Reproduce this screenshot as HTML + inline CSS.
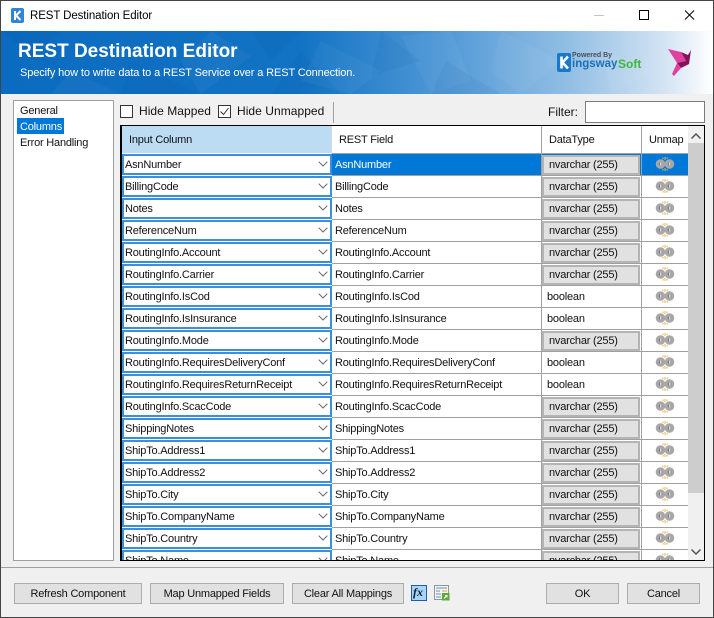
<!DOCTYPE html>
<html><head><meta charset="utf-8"><style>
html,body{margin:0;padding:0;width:714px;height:618px;overflow:hidden;background:#f0f0f0}
body{font-family:"Liberation Sans",sans-serif;font-size:11px;letter-spacing:-.2px;color:#111;position:relative}
.a{position:absolute;white-space:nowrap}
#win{position:absolute;left:0;top:0;width:712px;height:616px;border:1px solid #444}
.btn{position:absolute;top:583px;height:19px;background:#e1e1e1;border:1px solid #adadad;text-align:center;line-height:21px}
#grid{position:absolute;left:120px;top:125px;width:582px;height:434px;border:1px solid #000;border-left-width:2px;background:#fff;overflow:hidden}
.r{position:absolute;left:0;width:566px;height:22px;white-space:nowrap}
.i{position:absolute;left:0;top:0;width:205px;height:17px;border:2px solid #3a90dc;background:#fff;line-height:19px;padding-left:1px}
.f{position:absolute;left:210px;top:0;width:206px;height:21px;line-height:23px;padding-left:3px;border-bottom:1px solid #a0a0a0}
.t{position:absolute;left:420px;top:0;width:99px;height:21px;border-bottom:1px solid #a0a0a0;line-height:23px}
.t b{font-weight:normal;position:absolute;left:0;top:1px;width:89px;height:16px;border:2px solid #b4b4b4;background:#e1e1e1;line-height:17px;padding-left:5px}
.t span{position:absolute;left:5px}
.u{position:absolute;left:520px;top:0;width:46px;height:21px;border-bottom:1px solid #a0a0a0}
.u svg{position:absolute;left:13px;top:1px}
.c{position:absolute;left:194px;top:5px}
.v{position:absolute;top:0;width:1px;height:434px;background:#a0a0a0}
</style></head><body>
<svg width="0" height="0" style="position:absolute"><defs>
<symbol id="un" viewBox="0 0 20 18"><g fill="#a8a8a8"><circle cx="5.500" cy="9" r="4.800"/><circle cx="14.500" cy="9" r="4.800"/></g><g fill="#808080"><circle cx="5.500" cy="9" r="1.800"/><circle cx="14.500" cy="9" r="1.800"/></g><g fill="#dcdcdc"><rect x="5" y="7.500" width="1.500" height="3"/><rect x="14" y="7.500" width="1.500" height="3"/></g><path d="M10 2v3M10 13v3M7.500 2.500l.8 1.500M12.500 2.500l-.8 1.500M7.500 15.500l.8-1.500M12.500 15.500l-.8-1.500" stroke="#f5b04a" stroke-width="1" fill="none"/></symbol>
<symbol id="ch" viewBox="0 0 10 6"><path d="M.7.700 5 5 9.300.700" stroke="#666" stroke-width="1" fill="none"/></symbol>
</defs></svg>
<div id="win"></div>
<div class="a" style="left:1px;top:1px;width:712px;height:30px;background:#fff"></div>
<svg class="a" style="left:11px;top:8px" width="13" height="15"><rect width="13" height="15" rx="2" fill="#2f86d6"/><path d="M4 3v9M9.500 3 5 7.500 9.500 12" stroke="#fff" stroke-width="2" fill="none"/></svg>
<div class="a" style="left:30px;top:10px;font-size:11.500px;letter-spacing:-.1px;color:#000">REST Destination Editor</div>
<svg class="a" style="left:594px;top:10px" width="110" height="12"><path d="M0 5.500h10" stroke="#c4c4c4"/><rect x="45.500" y=".5" width="9" height="9" fill="none" stroke="#000"/><path d="M91 .5l9 9M100 .5l-9 9" stroke="#000"/></svg>

<svg class="a" style="left:1px;top:31px" width="712" height="63">
<defs><linearGradient id="g" x1="0" x2="1" y1="0" y2="0"><stop offset="0" stop-color="#0a6bc0"/><stop offset=".42" stop-color="#1273c4"/><stop offset=".62" stop-color="#4f98d6"/><stop offset=".8" stop-color="#93bfe4"/><stop offset=".93" stop-color="#d2e3f3"/><stop offset="1" stop-color="#fff"/></linearGradient></defs>
<rect width="712" height="63" fill="url(#g)"/>
<g fill="#fff" opacity=".04"><path d="M210 0 250 25 200 63 180 30Z"/><path d="M320 10 380 40 350 63 300 50Z"/><path d="M400 5 450 0 470 50 430 63Z"/><path d="M500 0 560 30 520 63 490 40Z"/><path d="M600 15 650 40 610 63Z"/><path d="M70 40 120 63 50 63Z"/></g>
<g fill="#003f80" opacity=".06"><path d="M380 0 420 30 370 45Z"/><path d="M300 20 340 63 270 63Z"/><path d="M250 0 300 0 270 30Z"/><path d="M445 30 500 63 430 63Z"/><path d="M0 0 60 0 30 25Z"/><path d="M130 30 200 63 120 63Z"/></g>
</svg>
<div class="a" style="left:18px;top:41px;font-size:19px;font-weight:bold;color:#fff;letter-spacing:0">REST Destination Editor</div>
<div class="a" style="left:20px;top:67px;font-size:11px;letter-spacing:-.12px;color:#fff">Specify how to write data to a REST Service over a REST Connection.</div>
<svg class="a" style="left:557px;top:53px" width="15" height="19"><rect width="14" height="19" rx="2" fill="#1a79c9"/><path d="M4.500 3.500v12M11 3.500 5.500 9.500 11 15.500" stroke="#fff" stroke-width="2.600" fill="none"/></svg>
<div class="a" style="left:572px;top:52px;font-size:7px;letter-spacing:0;font-weight:bold;color:#44505c">Powered By</div>
<div class="a" style="left:572px;top:58px;font-size:11.500px;letter-spacing:0;font-weight:bold;color:#1c6fb8">ingsway</div>
<div class="a" style="left:618px;top:57px;font-size:12px;letter-spacing:0;font-weight:bold;color:#3db83a">Soft</div>
<svg class="a" style="left:668px;top:48px" width="25" height="28"><path d="M0 1 13 4 18 13 9 15Z" fill="#e0409f"/><path d="M13 4 20 7 23 2 21 16 13 20 9 15 18 13Z" fill="#8a0f5c"/><path d="M9 15 13 20 6 28 4 26Z" fill="#e0409f"/></svg>

<div class="a" style="left:13px;top:100px;width:99px;height:459px;background:#fff;border:1px solid #a0a0a0"></div>
<div class="a" style="left:20px;top:105px">General</div>
<div class="a" style="left:17px;top:118px;width:47px;height:16px;background:#0078d7;color:#fff;line-height:19px;text-indent:3px">Columns</div>
<div class="a" style="left:20px;top:137px">Error Handling</div>

<div class="a" style="left:120px;top:105px;width:11px;height:11px;background:#fff;border:1px solid #333"></div>
<div class="a" style="left:139px;top:104px;font-size:12px;letter-spacing:.05px">Hide Mapped</div>
<svg class="a" style="left:218px;top:105px" width="13" height="13"><rect x=".5" y=".5" width="12" height="12" fill="#fff" stroke="#333"/><path d="M2.500 6.500 5.500 9.500 10.500 3" stroke="#333" fill="none"/></svg>
<div class="a" style="left:237px;top:104px;font-size:12px;letter-spacing:.05px">Hide Unmapped</div>
<div class="a" style="left:333px;top:102px;width:1px;height:21px;background:#a0a0a0"></div>
<div class="a" style="left:548px;top:105px;font-size:12px;letter-spacing:0">Filter:</div>
<div class="a" style="left:585px;top:101px;width:118px;height:20px;background:#fff;border:1px solid #7a7a7a"></div>

<div id="grid">
<div class="a" style="left:0;top:0;width:209px;height:27px;background:#bcdcf4"></div>
<div class="a" style="left:7px;top:8px">Input Column</div>
<div class="a" style="left:217px;top:8px">REST Field</div>
<div class="a" style="left:427px;top:8px">DataType</div>
<div class="a" style="left:527px;top:8px">Unmap</div>
<div class="a" style="left:209px;top:27px;width:357px;height:1px;background:#a0a0a0"></div>

<div class="r" style="top:28px"><div class="a" style="left:210px;top:0;width:356px;height:21px;background:#0078d7"></div><div class="i">AsnNumber<svg class="c" width="10" height="6"><use href="#ch"/></svg></div><div class="f" style="border-color:#a0a0a0;color:#fff">AsnNumber</div><div class="t"><b>nvarchar (255)</b></div><div class="u"><svg width="20" height="18"><use href="#un"/></svg></div></div>
<div class="r" style="top:50px"><div class="i">BillingCode<svg class="c" width="10" height="6"><use href="#ch"/></svg></div><div class="f">BillingCode</div><div class="t"><b>nvarchar (255)</b></div><div class="u"><svg width="20" height="18"><use href="#un"/></svg></div></div>
<div class="r" style="top:72px"><div class="i">Notes<svg class="c" width="10" height="6"><use href="#ch"/></svg></div><div class="f">Notes</div><div class="t"><b>nvarchar (255)</b></div><div class="u"><svg width="20" height="18"><use href="#un"/></svg></div></div>
<div class="r" style="top:94px"><div class="i">ReferenceNum<svg class="c" width="10" height="6"><use href="#ch"/></svg></div><div class="f">ReferenceNum</div><div class="t"><b>nvarchar (255)</b></div><div class="u"><svg width="20" height="18"><use href="#un"/></svg></div></div>
<div class="r" style="top:116px"><div class="i">RoutingInfo.Account<svg class="c" width="10" height="6"><use href="#ch"/></svg></div><div class="f">RoutingInfo.Account</div><div class="t"><b>nvarchar (255)</b></div><div class="u"><svg width="20" height="18"><use href="#un"/></svg></div></div>
<div class="r" style="top:138px"><div class="i">RoutingInfo.Carrier<svg class="c" width="10" height="6"><use href="#ch"/></svg></div><div class="f">RoutingInfo.Carrier</div><div class="t"><b>nvarchar (255)</b></div><div class="u"><svg width="20" height="18"><use href="#un"/></svg></div></div>
<div class="r" style="top:160px"><div class="i">RoutingInfo.IsCod<svg class="c" width="10" height="6"><use href="#ch"/></svg></div><div class="f">RoutingInfo.IsCod</div><div class="t"><span>boolean</span></div><div class="u"><svg width="20" height="18"><use href="#un"/></svg></div></div>
<div class="r" style="top:182px"><div class="i">RoutingInfo.IsInsurance<svg class="c" width="10" height="6"><use href="#ch"/></svg></div><div class="f">RoutingInfo.IsInsurance</div><div class="t"><span>boolean</span></div><div class="u"><svg width="20" height="18"><use href="#un"/></svg></div></div>
<div class="r" style="top:204px"><div class="i">RoutingInfo.Mode<svg class="c" width="10" height="6"><use href="#ch"/></svg></div><div class="f">RoutingInfo.Mode</div><div class="t"><b>nvarchar (255)</b></div><div class="u"><svg width="20" height="18"><use href="#un"/></svg></div></div>
<div class="r" style="top:226px"><div class="i">RoutingInfo.RequiresDeliveryConf<svg class="c" width="10" height="6"><use href="#ch"/></svg></div><div class="f">RoutingInfo.RequiresDeliveryConf</div><div class="t"><span>boolean</span></div><div class="u"><svg width="20" height="18"><use href="#un"/></svg></div></div>
<div class="r" style="top:248px"><div class="i">RoutingInfo.RequiresReturnReceipt<svg class="c" width="10" height="6"><use href="#ch"/></svg></div><div class="f">RoutingInfo.RequiresReturnReceipt</div><div class="t"><span>boolean</span></div><div class="u"><svg width="20" height="18"><use href="#un"/></svg></div></div>
<div class="r" style="top:270px"><div class="i">RoutingInfo.ScacCode<svg class="c" width="10" height="6"><use href="#ch"/></svg></div><div class="f">RoutingInfo.ScacCode</div><div class="t"><b>nvarchar (255)</b></div><div class="u"><svg width="20" height="18"><use href="#un"/></svg></div></div>
<div class="r" style="top:292px"><div class="i">ShippingNotes<svg class="c" width="10" height="6"><use href="#ch"/></svg></div><div class="f">ShippingNotes</div><div class="t"><b>nvarchar (255)</b></div><div class="u"><svg width="20" height="18"><use href="#un"/></svg></div></div>
<div class="r" style="top:314px"><div class="i">ShipTo.Address1<svg class="c" width="10" height="6"><use href="#ch"/></svg></div><div class="f">ShipTo.Address1</div><div class="t"><b>nvarchar (255)</b></div><div class="u"><svg width="20" height="18"><use href="#un"/></svg></div></div>
<div class="r" style="top:336px"><div class="i">ShipTo.Address2<svg class="c" width="10" height="6"><use href="#ch"/></svg></div><div class="f">ShipTo.Address2</div><div class="t"><b>nvarchar (255)</b></div><div class="u"><svg width="20" height="18"><use href="#un"/></svg></div></div>
<div class="r" style="top:358px"><div class="i">ShipTo.City<svg class="c" width="10" height="6"><use href="#ch"/></svg></div><div class="f">ShipTo.City</div><div class="t"><b>nvarchar (255)</b></div><div class="u"><svg width="20" height="18"><use href="#un"/></svg></div></div>
<div class="r" style="top:380px"><div class="i">ShipTo.CompanyName<svg class="c" width="10" height="6"><use href="#ch"/></svg></div><div class="f">ShipTo.CompanyName</div><div class="t"><b>nvarchar (255)</b></div><div class="u"><svg width="20" height="18"><use href="#un"/></svg></div></div>
<div class="r" style="top:402px"><div class="i">ShipTo.Country<svg class="c" width="10" height="6"><use href="#ch"/></svg></div><div class="f">ShipTo.Country</div><div class="t"><b>nvarchar (255)</b></div><div class="u"><svg width="20" height="18"><use href="#un"/></svg></div></div>
<div class="r" style="top:424px"><div class="i">ShipTo.Name<svg class="c" width="10" height="6"><use href="#ch"/></svg></div><div class="f">ShipTo.Name</div><div class="t"><b>nvarchar (255)</b></div><div class="u"><svg width="20" height="18"><use href="#un"/></svg></div></div>

<div class="v" style="left:209px;background:#d8d8d8;height:28px"></div><div class="v" style="left:419px"></div><div class="v" style="left:519px"></div>
<div class="a" style="left:566px;top:0;width:16px;height:434px;background:#f0f0f0"></div>
<div class="a" style="left:566px;top:17px;width:16px;height:350px;background:#cdcdcd"></div>
<svg class="a" style="left:569px;top:7px" width="10" height="6"><path d="M.5 5.500 5 1l4.500 4.500" stroke="#555" stroke-width="1.500" fill="none"/></svg>
<svg class="a" style="left:569px;top:423px" width="10" height="6"><path d="M.5.500 5 5l4.500-4.500" stroke="#555" stroke-width="1.500" fill="none"/></svg>
</div>

<div class="a" style="left:1px;top:567px;width:712px;height:1px;background:#a0a0a0"></div>
<div class="btn" style="left:14px;width:126px">Refresh Component</div>
<div class="btn" style="left:150px;width:132px">Map Unmapped Fields</div>
<div class="btn" style="left:292px;width:110px">Clear All Mappings</div>
<svg class="a" style="left:411px;top:585px" width="16" height="16"><rect x=".5" y=".5" width="15" height="15" fill="#a8d4f5" stroke="#1a5fb4"/></svg>
<div class="a" style="left:413px;top:585px;font:italic bold 12px 'Liberation Serif',serif;letter-spacing:0;color:#123">fx</div>
<svg class="a" style="left:434px;top:585px" width="16" height="16"><rect x=".5" y=".5" width="14" height="14" fill="#f4f4f4" stroke="#8a97a5"/><path d="M2 3h11M2 6h4M2 9h5M2 12h5" stroke="#6a90c0"/><path d="M8 6h5" stroke="#e6a33a"/><rect x="8" y="8" width="7.500" height="7.500" fill="#5fa83a"/><path d="M10 13.500l3-3M11 10.500h2v2" stroke="#fff" fill="none"/></svg>
<div class="btn" style="left:546px;width:71px">OK</div>
<div class="btn" style="left:627px;width:71px">Cancel</div>
</body></html>
